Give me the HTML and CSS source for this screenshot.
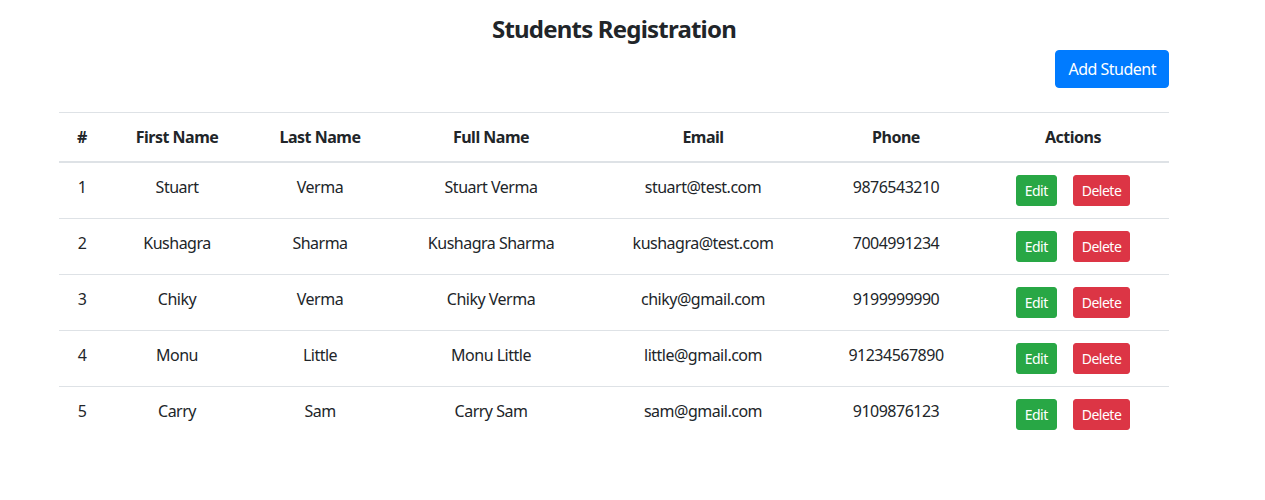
FILE: index.html
```html
<!DOCTYPE html>
<html>
<head>
<meta charset="utf-8">
<link rel="stylesheet" href="styles.css">
</head>
<body>
<div class="container">
  <h3 class="title">Students Registration</h3>
  <div class="toolbar"><button class="btn btn-primary">Add Student</button></div>
  <table class="table">
    <colgroup>
      <col class="c1"><col class="c2"><col class="c3"><col class="c4"><col class="c5"><col class="c6"><col class="c7">
    </colgroup>
    <thead>
      <tr><th>#</th><th>First Name</th><th>Last Name</th><th>Full Name</th><th>Email</th><th>Phone</th><th>Actions</th></tr>
    </thead>
    <tbody>
      <tr><td>1</td><td>Stuart</td><td>Verma</td><td>Stuart Verma</td><td>stuart@test.com</td><td>9876543210</td><td><button class="btn btn-sm btn-success">Edit</button><button class="btn btn-sm btn-danger">Delete</button></td></tr>
      <tr><td>2</td><td>Kushagra</td><td>Sharma</td><td>Kushagra Sharma</td><td>kushagra@test.com</td><td>7004991234</td><td><button class="btn btn-sm btn-success">Edit</button><button class="btn btn-sm btn-danger">Delete</button></td></tr>
      <tr><td>3</td><td>Chiky</td><td>Verma</td><td>Chiky Verma</td><td>chiky@gmail.com</td><td>9199999990</td><td><button class="btn btn-sm btn-success">Edit</button><button class="btn btn-sm btn-danger">Delete</button></td></tr>
      <tr><td>4</td><td>Monu</td><td>Little</td><td>Monu Little</td><td>little@gmail.com</td><td>91234567890</td><td><button class="btn btn-sm btn-success">Edit</button><button class="btn btn-sm btn-danger">Delete</button></td></tr>
      <tr><td>5</td><td>Carry</td><td>Sam</td><td>Carry Sam</td><td>sam@gmail.com</td><td>9109876123</td><td><button class="btn btn-sm btn-success">Edit</button><button class="btn btn-sm btn-danger">Delete</button></td></tr>
    </tbody>
  </table>
</div>
</body>
</html>
```
FILE: styles.css
```css
* { box-sizing: border-box; }
html, body { margin: 0; padding: 0; background: #fff; }
body {
  font-family: "Noto Sans", "Open Sans", "DejaVu Sans", sans-serif;
  font-size: 16px;
  line-height: 1.5;
  color: #212529;
  letter-spacing: -0.5px;
}
.container {
  width: 1110px;
  margin: 0 0 0 59px;
  padding-top: 15px;
}
.title {
  margin: 0;
  text-align: center;
  font-size: 24px;
  font-weight: 700;
  line-height: 1.2;
  height: 35px;
  letter-spacing: -0.8px;
}
.toolbar {
  display: flex;
  justify-content: flex-end;
  margin-bottom: 24px;
}
.btn {
  display: inline-block;
  font-family: inherit;
  font-weight: 400;
  color: #fff;
  border: 1px solid transparent;
  padding: 6px 12px;
  font-size: 16px;
  line-height: 1.5;
  border-radius: 4px;
  letter-spacing: -0.5px;
  cursor: pointer;
}
.btn-primary { background: #007bff; border-color: #007bff; }
.btn-success { background: #28a745; border-color: #28a745; }
.btn-danger { background: #dc3545; border-color: #dc3545; }
.btn-sm {
  padding: 4px 8px;
  font-size: 14px;
  line-height: 1.5;
  border-radius: 3px;
  margin: 0 8px;
  letter-spacing: -0.5px;
}
.table {
  width: 1110px;
  border-collapse: collapse;
  table-layout: fixed;
}
.c1 { width: 46px; }
.c2 { width: 144px; }
.c3 { width: 142px; }
.c4 { width: 200px; }
.c5 { width: 224px; }
.c6 { width: 162px; }
.c7 { width: 192px; }
.table th, .table td {
  padding: 12px;
  text-align: center;
  vertical-align: top;
  border-top: 1px solid #dee2e6;
  white-space: nowrap;
}
.table th { font-weight: 700; }
.table thead th {
  vertical-align: bottom;
  border-bottom: 2px solid #dee2e6;
}
.table thead + tbody tr:first-child td { border-top: 0; }
```
